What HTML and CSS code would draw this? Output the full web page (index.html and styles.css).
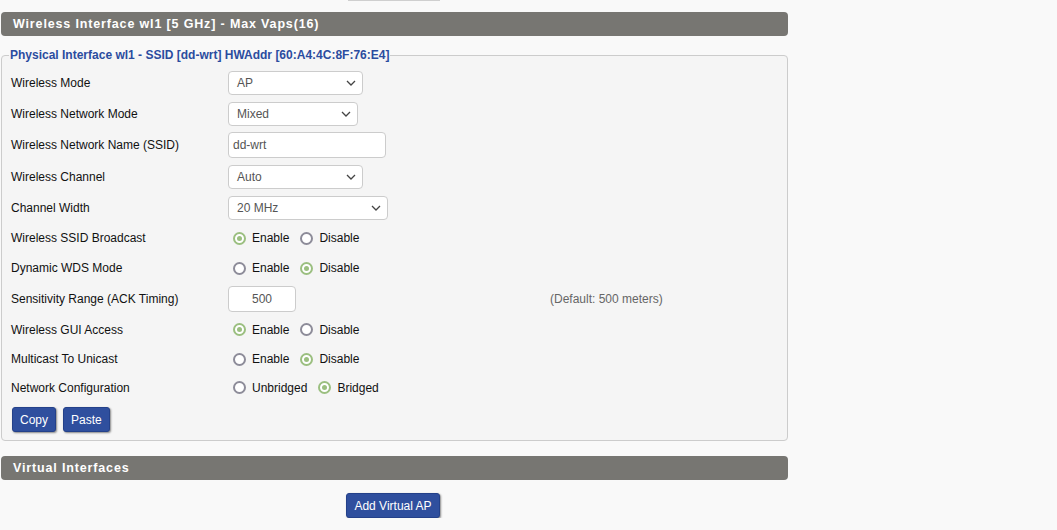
FILE: index.html
```html
<!DOCTYPE html>
<html>
<head>
<meta charset="utf-8">
<link rel="stylesheet" href="styles.css">
</head>
<body>
<div class="wrap">
  <div class="stub"></div>
  <h2 class="bar">Wireless Interface wl1 [5 GHz] - Max Vaps(16)</h2>
  <fieldset class="box">
    <legend>Physical Interface wl1 - SSID [dd-wrt] HWAddr [60:A4:4C:8F:76:E4]</legend>
    <div class="row"><span class="lbl">Wireless Mode</span><div class="sel w135"><span>AP</span><svg width="10" height="6" viewBox="0 0 10 6"><path d="M1 1l4 4 4-4" fill="none" stroke="#444" stroke-width="1.3"/></svg></div></div>
    <div class="row"><span class="lbl">Wireless Network Mode</span><div class="sel w130"><span>Mixed</span><svg width="10" height="6" viewBox="0 0 10 6"><path d="M1 1l4 4 4-4" fill="none" stroke="#444" stroke-width="1.3"/></svg></div></div>
    <div class="row r32"><span class="lbl">Wireless Network Name (SSID)</span><div class="inp w158">dd-wrt</div></div>
    <div class="row"><span class="lbl">Wireless Channel</span><div class="sel w135"><span>Auto</span><svg width="10" height="6" viewBox="0 0 10 6"><path d="M1 1l4 4 4-4" fill="none" stroke="#444" stroke-width="1.3"/></svg></div></div>
    <div class="row"><span class="lbl">Channel Width</span><div class="sel w160"><span>20 MHz</span><svg width="10" height="6" viewBox="0 0 10 6"><path d="M1 1l4 4 4-4" fill="none" stroke="#444" stroke-width="1.3"/></svg></div></div>
    <div class="row r30"><span class="lbl">Wireless SSID Broadcast</span><div class="radios"><span class="rad on"></span><span class="rt">Enable</span><span class="rad"></span><span class="rt">Disable</span></div></div>
    <div class="row r30"><span class="lbl">Dynamic WDS Mode</span><div class="radios"><span class="rad"></span><span class="rt">Enable</span><span class="rad on"></span><span class="rt">Disable</span></div></div>
    <div class="row"><span class="lbl">Sensitivity Range (ACK Timing)</span><div class="inp num">500</div><span class="def">(Default: 500 meters)</span></div>
    <div class="row"><span class="lbl">Wireless GUI Access</span><div class="radios"><span class="rad on"></span><span class="rt">Enable</span><span class="rad"></span><span class="rt">Disable</span></div></div>
    <div class="row r28"><span class="lbl">Multicast To Unicast</span><div class="radios"><span class="rad"></span><span class="rt">Enable</span><span class="rad on"></span><span class="rt">Disable</span></div></div>
    <div class="row r29"><span class="lbl">Network Configuration</span><div class="radios"><span class="rad"></span><span class="rt">Unbridged</span><span class="rad on"></span><span class="rt">Bridged</span></div></div>
    <div class="btns"><button class="btn">Copy</button><button class="btn">Paste</button></div>
  </fieldset>
  <h2 class="bar bar2">Virtual Interfaces</h2>
  <div class="center"><button class="btn big">Add Virtual AP</button></div>
</div>
</body>
</html>
```
FILE: styles.css
```css
html, body {
  margin: 0;
  padding: 0;
  background: #f9f9f9;
  font-family: "Liberation Sans", Arial, sans-serif;
  font-size: 12px;
  color: #111;
}
.wrap {
  width: 787px;
  margin-left: 1px;
}
.stub {
  width: 92px;
  height: 1px;
  margin-left: 347px;
  background: #cfcfcf;
}
.bar {
  margin: 11px 0 0 0;
  height: 24px;
  line-height: 24px;
  background: #777672;
  color: #fff;
  font-size: 12.5px;
  font-weight: bold;
  letter-spacing: 0.85px;
  padding-left: 12px;
  border-radius: 4px;
}
.box {
  margin: 12px 0 0 0;
  padding: 0 9px 8px 9px;
  border: 1px solid #cccccc;
  border-radius: 4px;
  background: #f5f5f5;
}
.box legend {
  color: #2b4c9f;
  font-weight: bold;
  font-size: 12px;
  padding: 0 1px;
  margin-left: -2px;
}
.row {
  display: flex;
  align-items: center;
  height: 31px;
}
.row:first-of-type {
  margin-top: 5px;
}
.r32 { height: 32px; }
.r30 { height: 30px; }
.r29 { height: 29px; }
.r28 { height: 28px; }
.lbl {
  width: 217px;
  flex: none;
}
.sel {
  box-sizing: border-box;
  height: 24px;
  background: #fff;
  border: 1px solid #cccccc;
  border-radius: 4px;
  display: flex;
  align-items: center;
  justify-content: space-between;
  padding: 0 6px 0 8px;
  color: #555;
}
.w135 { width: 135px; }
.w130 { width: 130px; }
.w160 { width: 160px; }
.w158 { width: 158px; }
.inp {
  box-sizing: border-box;
  height: 26px;
  line-height: 24px;
  background: #fff;
  border: 1px solid #cccccc;
  border-radius: 4px;
  padding-left: 4px;
  color: #555;
}
.num {
  width: 68px;
  padding: 0;
  text-align: center;
}
.def {
  margin-left: 254px;
  color: #666;
}
.radios {
  display: flex;
  align-items: center;
  padding-left: 5px;
}
.rad {
  box-sizing: border-box;
  width: 13px;
  height: 13px;
  border: 2px solid #8d8c99;
  border-radius: 50%;
  background: #fff;
  display: flex;
  align-items: center;
  justify-content: center;
}
.rad.on {
  border-color: #9bbf80;
}
.rad.on::after {
  content: "";
  width: 5px;
  height: 5px;
  border-radius: 50%;
  background: #9bbf80;
}
.rt {
  margin: 0 11px 0 6px;
}
.btns {
  display: flex;
  gap: 7px;
  margin-top: 5px;
  padding-left: 1px;
}
.btn {
  box-sizing: border-box;
  height: 25px;
  padding: 0 7px;
  background: #2f4f9e;
  color: #fff;
  border: 1px solid #24418a;
  border-radius: 3px;
  box-shadow: 1px 1px 2px rgba(0,0,0,0.45);
  font-family: "Liberation Sans", Arial, sans-serif;
  font-size: 12px;
}
.bar2 {
  margin-top: 15px;
}
.center {
  display: flex;
  justify-content: center;
  padding-right: 3px;
  margin-top: 13px;
}
.big {
  width: 94px;
  padding: 0;
}
```
